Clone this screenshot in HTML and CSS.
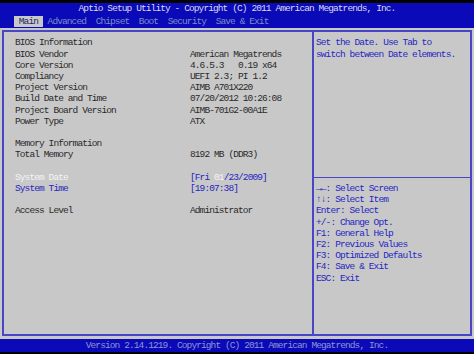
FILE: index.html
```html
<!DOCTYPE html>
<html lang="en">
<head>
  <meta charset="UTF-8" />
  <meta name="viewport" content="width=device-width, initial-scale=1.0"/>
  <title>Aptio Setup Utility</title>
  <link rel="stylesheet" href="styles.css">
</head>
<body>
  <div class="screen">
    <!-- Title bar with menu tabs -->
    <div class="top-bar">
      <div class="title">Aptio Setup Utility - Copyright (C) 2011 American Megatrends, Inc.</div>
      <div class="tabs">
        <span class="tab active">Main</span>
        <span class="tab">Advanced</span>
        <span class="tab">Chipset</span>
        <span class="tab">Boot</span>
        <span class="tab">Security</span>
        <span class="tab">Save &amp; Exit</span>
      </div>
    </div>

    <!-- Main frame -->
    <div class="main">
      <div class="frame">
        <div class="left-panel">
          <div class="row"><span class="label">BIOS Information</span></div>
          <div class="row"><span class="label">BIOS Vendor</span><span class="value">American Megatrends</span></div>
          <div class="row"><span class="label">Core Version</span><span class="value">4.6.5.3   0.19 x64</span></div>
          <div class="row"><span class="label">Compliancy</span><span class="value">UEFI 2.3; PI 1.2</span></div>
          <div class="row"><span class="label">Project Version</span><span class="value">AIMB A701X220</span></div>
          <div class="row"><span class="label">Build Date and Time</span><span class="value">07/20/2012 10:26:08</span></div>
          <div class="row"><span class="label">Project Board Version</span><span class="value">AIMB-701G2-00A1E</span></div>
          <div class="row"><span class="label">Power Type</span><span class="value">ATX</span></div>
          <div class="row"></div>
          <div class="row"><span class="label">Memory Information</span></div>
          <div class="row"><span class="label">Total Memory</span><span class="value">8192 MB (DDR3)</span></div>
          <div class="row"></div>
          <div class="row"><span class="label selected">System Date</span><span class="value link">[Fri <span class="field">01</span>/23/2009]</span></div>
          <div class="row"><span class="label link">System Time</span><span class="value link">[19:07:38]</span></div>
          <div class="row"></div>
          <div class="row"><span class="label">Access Level</span><span class="value">Administrator</span></div>
        </div>

        <div class="right-panel">
          <div class="help">Set the Date. Use Tab to<br>switch between Date elements.</div>
          <div class="divider"></div>
          <div class="keys">
            <div>→←: Select Screen</div>
            <div>↑↓: Select Item</div>
            <div>Enter: Select</div>
            <div>+/-: Change Opt.</div>
            <div>F1: General Help</div>
            <div>F2: Previous Values</div>
            <div>F3: Optimized Defaults</div>
            <div>F4: Save &amp; Exit</div>
            <div>ESC: Exit</div>
          </div>
        </div>
      </div>
    </div>

    <!-- Footer -->
    <div class="footer">Version 2.14.1219. Copyright (C) 2011 American Megatrends, Inc.</div>
  </div>
</body>
</html>
```

FILE: styles.css
```css
/*
  Global reset and font
*/
* {
  box-sizing: border-box;
  margin: 0;
  padding: 0;
}
body {
  background: #000000;
  font-family: "Liberation Mono", "DejaVu Sans Mono", monospace;
  font-size: 9.5px;
  letter-spacing: -0.9px;
  color: #2a2a2a;
}
.screen {
  width: 474px;
  height: 354px;
  display: flex;
  flex-direction: column;
  padding: 3px 0 2px;
  overflow: hidden;
}
/*
  Top bar: title and tabs
*/
.top-bar {
  background: #0a0ab8;
  height: 25px;
  flex: none;
}
.title {
  height: 13px;
  line-height: 12px;
  text-align: center;
  white-space: nowrap;
  color: #d8d8ea;
}
.tabs {
  display: flex;
  padding-left: 14px;
  height: 11px;
}
.tab {
  padding: 0 4.8px;
  line-height: 11px;
  white-space: pre;
  color: #7e8cc6;
}
.tab.active {
  background: #c8c8c8;
  color: #1a2a66;
}
/*
  Gray main area with blue frame
*/
.main {
  flex: 1;
  min-height: 0;
  background: #c8c8c8;
  padding: 2px 2px 3px;
  display: flex;
}
.frame {
  flex: 1;
  display: flex;
  border: 2px solid #4646c6;
}
.left-panel {
  width: 310px;
  border-right: 2px solid #4646c6;
  padding: 5.4px 0 0 11px;
}
.row {
  display: flex;
  height: 11.2px;
  line-height: 11.2px;
}
.label {
  width: 175px;
  flex: none;
}
.value {
  white-space: pre;
}
.selected {
  color: #f4f4f4;
}
.link {
  color: #2626c0;
}
.field {
  color: #f4f4f4;
}
/*
  Help panel on the right
*/
.right-panel {
  flex: 1;
  display: flex;
  flex-direction: column;
  padding-top: 5.4px;
  color: #2626c4;
}
.help {
  height: 139.6px;
  padding-left: 2px;
  line-height: 11.2px;
}
.divider {
  height: 1px;
  background: #4646c6;
}
.keys {
  padding: 5px 0 0 2px;
  line-height: 11.2px;
}
/*
  Footer
*/
.footer {
  flex: none;
  background: #0a0ab8;
  height: 13px;
  line-height: 13px;
  text-align: center;
  white-space: nowrap;
  color: #8e96d2;
}
```
